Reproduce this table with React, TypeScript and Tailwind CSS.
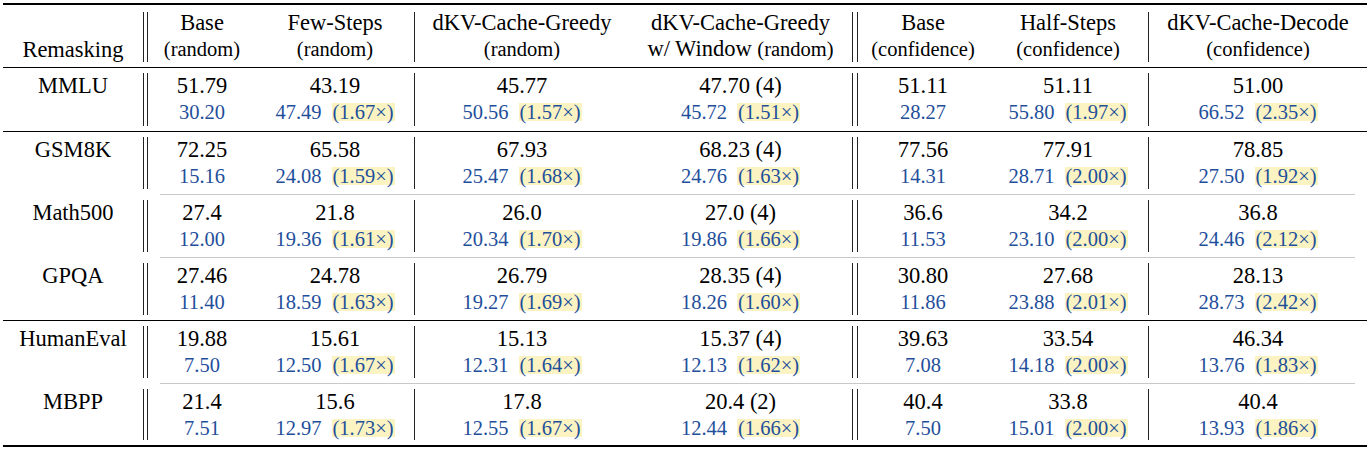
import React from 'react';

// colonnes: label | double | base | few | simple | greedy | window | double | base conf | half | simple | decode
const cols =
  'grid grid-cols-[140px_5px_108px_158px_1px_214px_223px_6px_130px_160px_1px_218px]';

type Cell = { main: string; sub: string; speed?: string };
type Row = { name: string; cells: Cell[] };

const rows: Row[] = [
  {
    name: 'MMLU',
    cells: [
      { main: '51.79', sub: '30.20' },
      { main: '43.19', sub: '47.49', speed: '1.67' },
      { main: '45.77', sub: '50.56', speed: '1.57' },
      { main: '47.70 (4)', sub: '45.72', speed: '1.51' },
      { main: '51.11', sub: '28.27' },
      { main: '51.11', sub: '55.80', speed: '1.97' },
      { main: '51.00', sub: '66.52', speed: '2.35' },
    ],
  },
  {
    name: 'GSM8K',
    cells: [
      { main: '72.25', sub: '15.16' },
      { main: '65.58', sub: '24.08', speed: '1.59' },
      { main: '67.93', sub: '25.47', speed: '1.68' },
      { main: '68.23 (4)', sub: '24.76', speed: '1.63' },
      { main: '77.56', sub: '14.31' },
      { main: '77.91', sub: '28.71', speed: '2.00' },
      { main: '78.85', sub: '27.50', speed: '1.92' },
    ],
  },
  {
    name: 'Math500',
    cells: [
      { main: '27.4', sub: '12.00' },
      { main: '21.8', sub: '19.36', speed: '1.61' },
      { main: '26.0', sub: '20.34', speed: '1.70' },
      { main: '27.0 (4)', sub: '19.86', speed: '1.66' },
      { main: '36.6', sub: '11.53' },
      { main: '34.2', sub: '23.10', speed: '2.00' },
      { main: '36.8', sub: '24.46', speed: '2.12' },
    ],
  },
  {
    name: 'GPQA',
    cells: [
      { main: '27.46', sub: '11.40' },
      { main: '24.78', sub: '18.59', speed: '1.63' },
      { main: '26.79', sub: '19.27', speed: '1.69' },
      { main: '28.35 (4)', sub: '18.26', speed: '1.60' },
      { main: '30.80', sub: '11.86' },
      { main: '27.68', sub: '23.88', speed: '2.01' },
      { main: '28.13', sub: '28.73', speed: '2.42' },
    ],
  },
  {
    name: 'HumanEval',
    cells: [
      { main: '19.88', sub: '7.50' },
      { main: '15.61', sub: '12.50', speed: '1.67' },
      { main: '15.13', sub: '12.31', speed: '1.64' },
      { main: '15.37 (4)', sub: '12.13', speed: '1.62' },
      { main: '39.63', sub: '7.08' },
      { main: '33.54', sub: '14.18', speed: '2.00' },
      { main: '46.34', sub: '13.76', speed: '1.83' },
    ],
  },
  {
    name: 'MBPP',
    cells: [
      { main: '21.4', sub: '7.51' },
      { main: '15.6', sub: '12.97', speed: '1.73' },
      { main: '17.8', sub: '12.55', speed: '1.67' },
      { main: '20.4 (2)', sub: '12.44', speed: '1.66' },
      { main: '40.4', sub: '7.50' },
      { main: '33.8', sub: '15.01', speed: '2.00' },
      { main: '40.4', sub: '13.93', speed: '1.86' },
    ],
  },
];

const Single = ({ top = 'mt-[5px]', bottom = 'mb-[5px]' }: { top?: string; bottom?: string }) => (
  <div className="flex justify-center">
    <div className={`w-px bg-[#222] ${top} ${bottom}`} />
  </div>
);

const Double = ({ top = 'mt-[5px]', bottom = 'mb-[5px]' }: { top?: string; bottom?: string }) => (
  <div className="flex justify-between">
    <div className={`w-px bg-[#222] ${top} ${bottom}`} />
    <div className={`w-px bg-[#222] ${top} ${bottom}`} />
  </div>
);

const DataCell = ({ cell }: { cell: Cell }) => (
  <div className="pt-[4px] text-center whitespace-nowrap">
    <div className="text-[22.5px] leading-[27px] text-black">{cell.main}</div>
    <div className="text-[20.5px] leading-[27px] text-[#1f4f9b]">
      {cell.sub}
      {cell.speed && (
        <span className="ml-[10px] inline-block bg-[#fbf4c2] px-[1px] leading-[18px]">
          ({cell.speed}×)
        </span>
      )}
    </div>
  </div>
);

const Head = ({ title, sub }: { title: React.ReactNode; sub?: string }) => (
  <div className="pt-[5px] text-center leading-[26px] whitespace-nowrap">
    <div className="text-[22.5px]">{title}</div>
    {sub && <div className="text-[20.5px]">{sub}</div>}
  </div>
);

const BlockRow = ({ row, h }: { row: Row; h: string }) => (
  <div className={`${cols} ${h}`}>
    <div className="pt-[4px] text-center text-[22.5px] leading-[27px]">{row.name}</div>
    <Double />
    <DataCell cell={row.cells[0]} />
    <DataCell cell={row.cells[1]} />
    <Single />
    <DataCell cell={row.cells[2]} />
    <DataCell cell={row.cells[3]} />
    <Double />
    <DataCell cell={row.cells[4]} />
    <DataCell cell={row.cells[5]} />
    <Single />
    <DataCell cell={row.cells[6]} />
  </div>
);

const LightRule = () => <div className="ml-[157px] mr-[12px] h-px bg-[#c9c9c9]" />;
const Rule = () => <div className="h-px bg-black" />;

export default function App() {
  return (
    <div
      className="h-[450px] w-[1370px] bg-white pt-[3px] pl-[3px] text-black"
      style={{ fontFamily: '"Liberation Serif", "Times New Roman", serif' }}
    >
      <div className="w-[1364px]">
        <div className="h-[2px] bg-black" />

        <div className={`${cols} h-[62px]`}>
          <div className="flex items-end justify-center pb-[4px] text-[22.5px] leading-[26px]">Remasking</div>
          <Double top="mt-[7px]" />
          <Head title="Base" sub="(random)" />
          <Head title="Few-Steps" sub="(random)" />
          <Single top="mt-[7px]" />
          <Head title="dKV-Cache-Greedy" sub="(random)" />
          <div className="pt-[5px] text-center leading-[26px] whitespace-nowrap">
            <div className="text-[22.5px]">dKV-Cache-Greedy</div>
            <div className="text-[22.5px]">
              w/ Window <span className="text-[20.5px]">(random)</span>
            </div>
          </div>
          <Double top="mt-[7px]" />
          <Head title="Base" sub="(confidence)" />
          <Head title="Half-Steps" sub="(confidence)" />
          <Single top="mt-[7px]" />
          <Head title="dKV-Cache-Decode" sub="(confidence)" />
        </div>

        <Rule />
        <BlockRow row={rows[0]} h="h-[63px]" />
        <Rule />
        <BlockRow row={rows[1]} h="h-[62px]" />
        <LightRule />
        <BlockRow row={rows[2]} h="h-[62px]" />
        <LightRule />
        <BlockRow row={rows[3]} h="h-[62px]" />
        <Rule />
        <BlockRow row={rows[4]} h="h-[62px]" />
        <LightRule />
        <BlockRow row={rows[5]} h="h-[61px]" />
        <div className="h-[2px] bg-black" />
      </div>
    </div>
  );
}
